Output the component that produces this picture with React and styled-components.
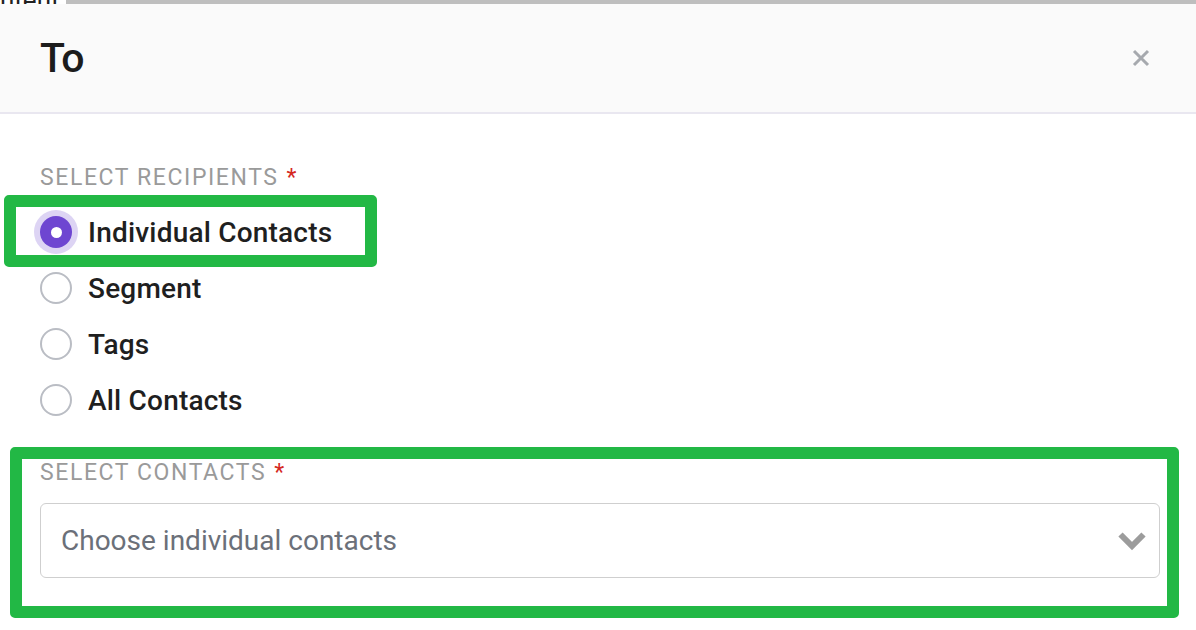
import styled, { createGlobalStyle } from "styled-components";

const GlobalStyle = createGlobalStyle`
  html, body {
    margin: 0;
    padding: 0;
    background: #ffffff;
    font-family: Roboto, "Liberation Sans", Arial, sans-serif;
  }
`;

const Page = styled.div`
  width: 1196px;
  height: 630px;
  overflow: hidden;
  background: #ffffff;
`;

const TopStrip = styled.div`
  display: flex;
  height: 4px;
  overflow: hidden;
`;

const BehindText = styled.span`
  align-self: flex-end;
  margin-bottom: -6px;
  padding-right: 6px;
  font-size: 26px;
  line-height: 20px;
  color: #222;
  white-space: nowrap;
`;

const TopBar = styled.div`
  flex: 1;
  background: #bebebe;
`;

const Header = styled.div`
  display: flex;
  align-items: center;
  justify-content: space-between;
  height: 110px;
  padding: 0 46px 0 40px;
  background: #fafafa;
  border-bottom: 2px solid #e9e7f0;
  box-sizing: border-box;
`;

const Title = styled.h2`
  margin: 0;
  font-size: 41px;
  font-weight: 500;
  color: #1c1c1c;
  letter-spacing: -1px;
`;

const CloseButton = styled.button`
  display: flex;
  border: none;
  background: none;
  padding: 0;
  cursor: pointer;
`;

const Body = styled.div`
  padding: 50px 36px 0 40px;
`;

const Label = styled.div`
  font-size: 23px;
  line-height: 28px;
  font-weight: 400;
  letter-spacing: 1.6px;
  color: #9a9a9a;
  text-transform: uppercase;
`;

const Required = styled.span`
  color: #d5281f;
  margin-left: 8px;
`;

const RadioList = styled.div`
  display: flex;
  flex-direction: column;
  margin-top: 12px;
`;

const RadioRow = styled.label`
  position: relative;
  display: flex;
  align-items: center;
  gap: 16px;
  height: 56px;
  cursor: pointer;
`;

const Radio = styled.span`
  width: 32px;
  height: 32px;
  border-radius: 50%;
  box-sizing: border-box;
  display: flex;
  align-items: center;
  justify-content: center;
  border: ${(p) => (p.$checked ? "none" : "2px solid #babdc4")};
  background: ${(p) => (p.$checked ? "#6e46d1" : "#fff")};
  box-shadow: ${(p) => (p.$checked ? "0 0 0 6px #ddd4f4" : "none")};

  &::after {
    content: "";
    display: ${(p) => (p.$checked ? "block" : "none")};
    width: 11px;
    height: 11px;
    border-radius: 50%;
    background: #fff;
  }
`;

const RadioText = styled.span`
  font-size: 28px;
  font-weight: 500;
  letter-spacing: 0.2px;
  color: #1f1f1f;
`;

const Highlight = styled.div`
  position: absolute;
  top: ${(p) => p.$top}px;
  bottom: ${(p) => p.$bottom}px;
  left: ${(p) => p.$left}px;
  ${(p) => (p.$width ? `width: ${p.$width}px;` : `right: ${p.$right}px;`)}
  box-sizing: border-box;
  border: 12px solid #22b845;
  border-radius: 5px;
  pointer-events: none;
`;

const Field = styled.div`
  position: relative;
  margin-top: 31px;
`;

const Select = styled.div`
  display: flex;
  align-items: center;
  justify-content: space-between;
  height: 75px;
  margin-top: 16px;
  padding: 0 12px 0 20px;
  border: 1.5px solid #cfcfcf;
  border-radius: 6px;
  box-sizing: border-box;
  cursor: pointer;
`;

const Placeholder = styled.span`
  font-size: 28px;
  color: #6b7079;
`;

const options = ["Individual Contacts", "Segment", "Tags", "All Contacts"];

const App = () => {
  return (
    <Page>
      <GlobalStyle />
      <TopStrip>
        <BehindText>ntent</BehindText>
        <TopBar />
      </TopStrip>
      <Header>
        <Title>To</Title>
        <CloseButton aria-label="Close">
          <svg width="18" height="18" viewBox="0 0 18 18">
            <path d="M2 2L16 16M16 2L2 16" stroke="#a6a9ae" strokeWidth="3" />
          </svg>
        </CloseButton>
      </Header>
      <Body>
        <Label>
          Select recipients<Required>*</Required>
        </Label>
        <RadioList>
          {options.map((o, i) => (
            <RadioRow key={o}>
              <Radio $checked={i === 0} />
              <RadioText>{o}</RadioText>
              {i === 0 && <Highlight $top={-9} $bottom={-7} $left={-36} $width={373} />}
            </RadioRow>
          ))}
        </RadioList>
        <Field>
          <Label>
            Select contacts<Required>*</Required>
          </Label>
          <Select>
            <Placeholder>Choose individual contacts</Placeholder>
            <svg width="30" height="22" viewBox="0 0 30 22">
              <path d="M3.5 4.5L15 16L26.5 4.5" fill="none" stroke="#9c9c9c" strokeWidth="6" />
            </svg>
          </Select>
          <Highlight $top={-12} $bottom={-40} $left={-30} $right={-19} />
        </Field>
      </Body>
    </Page>
  );
};

export default App;
